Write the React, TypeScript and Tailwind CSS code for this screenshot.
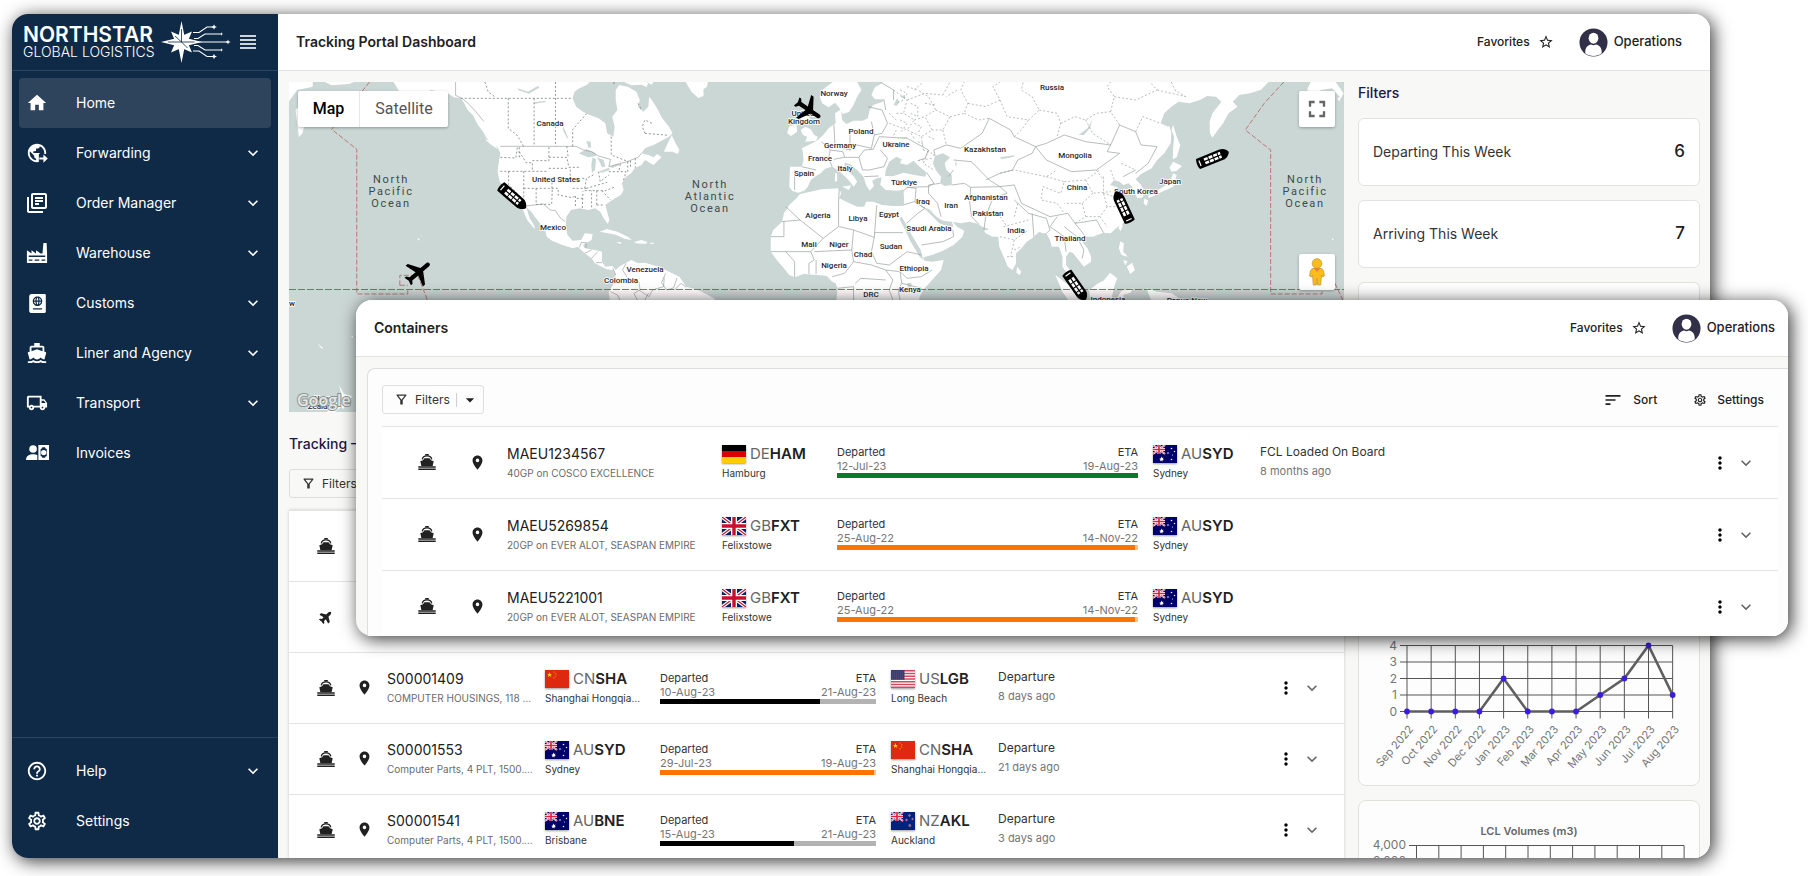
import React from 'react';
import {
    MdArrowDropDown,
    MdDirectionsBoat,
    MdFlight,
    MdFullscreen,
    MdHelpOutline,
    MdHome,
    MdKeyboardArrowDown,
    MdMoreVert,
    MdOutlineFilterAlt,
    MdOutlineLibraryBooks,
    MdOutlineLocalShipping,
    MdOutlineSettings,
    MdPlace,
    MdSort,
    MdStarBorder,
} from 'react-icons/md';
import { FaPassport, FaPlane } from 'react-icons/fa';

type Country = 'AU' | 'CN' | 'DE' | 'GB' | 'NZ' | 'US';

type Port = { country: Country; code: string; city: string };

type Shipment = {
    mode: 'sea' | 'air';
    ref?: string;
    detail?: string;
    from?: Port;
    to?: Port;
    departed?: string;
    eta?: string;
    progress?: number;
    tone?: 'green' | 'orange' | 'black';
    event?: string;
    eventAge?: string;
};

const sydney: Port = { country: 'AU', code: 'SYD', city: 'Sydney' };
const felixstowe: Port = { country: 'GB', code: 'FXT', city: 'Felixstowe' };
const shanghai: Port = { country: 'CN', code: 'SHA', city: 'Shanghai Hongqiao Intl' };

const containers: Shipment[] = [
    {
        mode: 'sea', ref: 'MAEU1234567', detail: '40GP on COSCO EXCELLENCE',
        from: { country: 'DE', code: 'HAM', city: 'Hamburg' }, to: sydney,
        departed: '12-Jul-23', eta: '19-Aug-23', progress: 100, tone: 'green',
        event: 'FCL Loaded On Board', eventAge: '8 months ago',
    },
    {
        mode: 'sea', ref: 'MAEU5269854', detail: '20GP on EVER ALOT, SEASPAN EMPIRE',
        from: felixstowe, to: sydney,
        departed: '25-Aug-22', eta: '14-Nov-22', progress: 99, tone: 'orange',
    },
    {
        mode: 'sea', ref: 'MAEU5221001', detail: '20GP on EVER ALOT, SEASPAN EMPIRE',
        from: felixstowe, to: sydney,
        departed: '25-Aug-22', eta: '14-Nov-22', progress: 99, tone: 'orange',
    },
];

const shipments: Shipment[] = [
    { mode: 'sea' },
    { mode: 'air' },
    {
        mode: 'sea', ref: 'S00001409', detail: 'COMPUTER HOUSINGS, 118 PLT, 2400 KG',
        from: shanghai, to: { country: 'US', code: 'LGB', city: 'Long Beach' },
        departed: '10-Aug-23', eta: '21-Aug-23', progress: 74, tone: 'black',
        event: 'Departure', eventAge: '8 days ago',
    },
    {
        mode: 'sea', ref: 'S00001553', detail: 'Computer Parts, 4 PLT, 1500.000 KG',
        from: sydney, to: shanghai,
        departed: '29-Jul-23', eta: '19-Aug-23', progress: 99, tone: 'orange',
        event: 'Departure', eventAge: '21 days ago',
    },
    {
        mode: 'sea', ref: 'S00001541', detail: 'Computer Parts, 4 PLT, 1500.000 KG',
        from: { country: 'AU', code: 'BNE', city: 'Brisbane' },
        to: { country: 'NZ', code: 'AKL', city: 'Auckland' },
        departed: '15-Aug-23', eta: '21-Aug-23', progress: 62, tone: 'black',
        event: 'Departure', eventAge: '3 days ago',
    },
];

const fillTone = { green: 'bg-[#0b7a24]', orange: 'bg-[#ff7300]', black: 'bg-black' };
const trackTone = { green: 'bg-[#9fcfa8]', orange: 'bg-[#ffc28f]', black: 'bg-[#b3b3b3]' };

/* ---------- icons ---------- */

const GlobeForwardIcon = () => (
    <svg viewBox="0 0 24 24" className="size-[22px]" fill="currentColor">
        <path d="M12 2C6.480 2 2 6.480 2 12s4.480 10 10 10 10-4.480 10-10S17.520 2 12 2zm-1 17.930c-3.950-.49-7-3.850-7-7.930 0-.62.08-1.210.21-1.790L9 15v1c0 1.100.9 2 2 2v1.930zm6.900-2.540c-.26-.81-1-1.390-1.900-1.390h-1v-3c0-.55-.45-1-1-1H8v-2h2c.55 0 1-.45 1-1V7h2c1.100 0 2-.9 2-2v-.41c2.930 1.190 5 4.060 5 7.410 0 2.080-.8 3.970-2.100 5.390z" />
        <path fill="#0f2a47" d="M14 13h10v11H14z" />
        <path d="M19 13.500l4.800 4.500-4.800 4.500v-3.400h-4.500v-2.200H19z" />
    </svg>
);

const FactoryIcon = () => (
    <svg viewBox="0 0 24 24" className="size-[22px]">
        <path fill="currentColor" d="M1 23V9l5 3.500V9l5 3.500V9l5 3.500h2L19 1h3.500L23 12.500V23z" />
        <path stroke="#0f2a47" strokeWidth="1.500" d="M3 15.500h18M3 19.800h4m2.500 0h5m2.500 0h4" />
    </svg>
);

const InvoiceIcon = () => (
    <svg viewBox="0 0 26 20" className="h-[18px] w-[23px]" fill="currentColor">
        <circle cx="8" cy="5.500" r="4.300" />
        <path d="M0 18c0-5 4-6.500 8-6.500 2 0 3.500.3 4.800 1V18z" />
        <path fillRule="evenodd" d="M14 1h12v17H14zM18.500 3.500a2.500 2.500 0 0 1-2 2v8a2.500 2.500 0 0 1 2 2h3a2.500 2.500 0 0 1 2-2v-8a2.500 2.500 0 0 1-2-2zM20 6.500a3 3 0 1 1 0 6 3 3 0 0 1 0-6z" />
    </svg>
);

const ShipIcon = () => (
    <svg viewBox="0 0 24 22" className="inline-block h-4 w-[18px]" fill="currentColor">
        <path d="M9.500 0h5v2h-5z" />
        <path fill="none" stroke="currentColor" strokeWidth="1.800" d="M5.500 7.500C6 4 8 2.600 12 2.600S18 4 18.500 7.500" />
        <path d="M6.500 8.500l2-2.500h7l2 2.500 3.700 1.300-1.500 7H4.300l-1.500-7z" />
        <path d="M0 17h24v1.900H0zM0 20h24v1.900H0z" />
    </svg>
);

const AvatarIcon = () => (
    <svg viewBox="0 0 30 30" className="size-[29px]">
        <circle cx="15" cy="15" r="14.500" fill="#322f48" />
        <ellipse cx="15" cy="10.500" rx="5" ry="5.700" fill="#fff" />
        <path fill="#fff" d="M6.500 26c-.5-6 3-8.500 6-9 1.600 1 3.500 1 5 0 3 .5 6.500 3 6 9-4.500 3.800-12.500 3.800-17 0z" />
    </svg>
);

const StarLogo = () => (
    <svg viewBox="0 0 70 42" className="h-[42px] w-[70px]" fill="none" stroke="#fff">
        <path strokeWidth="1.100" d="M32 11.500h6l8-5.500h7M33 17.500h4l7-4.500h17M36 21h31M33 24.500h4l7 4.500h17M32 30h6l8 5.500h7" />
        <path fill="#fff" stroke="none" d="M53 3.500l1 1.700 2 .8-2 .8-1 1.700-1-1.700-2-.8 2-.8zM53 33l1 1.700 2 .8-2 .8-1 1.700-1-1.700-2-.8 2-.8zM60 11l.7 1.400 1.500.6-1.500.6L60 15zM60 27l.7 1.400 1.500.6-1.500.6L60 31zM67 18.500l.7 1.800 2 .7-2 .7-.7 1.800-.7-1.800-2-.7 2-.7z" />
        <path fill="#fff" stroke="none" d="M20.500 0l3.300 16.800L41 21l-17.200 4.200L20.500 42l-3.300-16.800L0 21l17.200-4.200z" />
        <path fill="#fff" stroke="none" d="M10 10.500l10.500 4.500L31 10.500 26.500 21 31 31.500 20.500 27 10 31.500 14.500 21z" />
        <path stroke="#0f2a47" strokeWidth=".8" d="M20.500 8v13H7M20.500 21l-6.500-6M20.500 21h13M20.500 21l6 6" />
    </svg>
);

const Flag = ({ country }: { country: Country }) => (
    <svg viewBox="0 0 24 18" preserveAspectRatio="none" className="h-[18px] w-6 shrink-0 shadow-[0_1px_2px_rgba(0,0,0,0.4)]">
        {country === 'DE' && (
            <>
                <path fill="#000" d="M0 0h24v6H0z" />
                <path fill="#d00" d="M0 6h24v6H0z" />
                <path fill="#ffce00" d="M0 12h24v6H0z" />
            </>
        )}
        {country === 'GB' && (
            <>
                <path fill="#012169" d="M0 0h24v18H0z" />
                <path stroke="#fff" strokeWidth="3.600" d="M0 0l24 18M24 0L0 18" />
                <path stroke="#c8102e" strokeWidth="1.200" d="M0 0l24 18M24 0L0 18" />
                <path stroke="#fff" strokeWidth="6" d="M12 0v18M0 9h24" />
                <path stroke="#c8102e" strokeWidth="3.400" d="M12 0v18M0 9h24" />
            </>
        )}
        {(country === 'AU' || country === 'NZ') && (
            <>
                <path fill={country === 'AU' ? '#00006a' : '#00217d'} d="M0 0h24v18H0z" />
                <path stroke="#fff" strokeWidth="2" d="M0 0l12 9M12 0L0 9" />
                <path stroke="#e4405a" strokeWidth=".8" d="M0 0l12 9M12 0L0 9" />
                <path stroke="#fff" strokeWidth="3" d="M6 0v9M0 4.500h12" />
                <path stroke="#e4203e" strokeWidth="1.700" d="M6 0v9M0 4.500h12" />
            </>
        )}
        {country === 'AU' && (
            <g fill="#fff">
                <path d="M8.500 11.500l.6 1.400 1.500-.3-.8 1.300 1.100 1-1.500.3-.1 1.500-.9-1.200-1.300.7.400-1.500-1.300-.7 1.400-.5z" />
                <circle cx="18.500" cy="3.500" r=".8" />
                <circle cx="15" cy="8" r=".8" />
                <circle cx="21.500" cy="6.500" r=".7" />
                <circle cx="19.500" cy="10" r=".5" />
                <circle cx="18.500" cy="14.500" r=".8" />
            </g>
        )}
        {country === 'NZ' && (
            <g fill="#d8304a" stroke="#fff" strokeWidth=".3">
                <circle cx="18.500" cy="3.500" r=".9" />
                <circle cx="15.500" cy="8" r=".9" />
                <circle cx="21.500" cy="7" r=".8" />
                <circle cx="18.800" cy="13.500" r="1.100" />
            </g>
        )}
        {country === 'CN' && (
            <>
                <path fill="#de2910" d="M0 0h24v18H0z" />
                <path fill="#ffde00" d="M4.500 2l.6 1.900H7L5.500 5l.6 1.900-1.600-1.100-1.600 1.100L3.500 5 2 3.900h1.900z" />
                <g fill="#ffb000">
                    <circle cx="9" cy="2" r=".6" />
                    <circle cx="10.800" cy="3.800" r=".6" />
                    <circle cx="10.800" cy="6" r=".6" />
                    <circle cx="9" cy="7.800" r=".6" />
                </g>
            </>
        )}
        {country === 'US' && (
            <>
                <path fill="#fff" d="M0 0h24v18H0z" />
                <path stroke="#cf4a5c" strokeWidth="1.400" d="M0 .7h24M0 3.500h24M0 6.200h24M0 9h24M0 11.800h24M0 14.500h24M0 17.300h24" />
                <path fill="#3c3b6e" d="M0 0h13.500v9.700H0z" />
                <path stroke="#8c90b8" strokeWidth=".5" strokeDasharray=".6 1.400" d="M1 2h12M1 4h12M1 6h12M1 8h12" />
            </>
        )}
    </svg>
);

/* ---------- sidebar ---------- */

const navItems = [
    { label: 'Home', icon: <MdHome className="size-[22px]" />, active: true },
    { label: 'Forwarding', icon: <GlobeForwardIcon />, expandable: true },
    { label: 'Order Manager', icon: <MdOutlineLibraryBooks className="size-6" />, expandable: true },
    { label: 'Warehouse', icon: <FactoryIcon />, expandable: true },
    { label: 'Customs', icon: <FaPassport className="size-[19px]" />, expandable: true },
    { label: 'Liner and Agency', icon: <MdDirectionsBoat className="size-[22px]" />, expandable: true },
    { label: 'Transport', icon: <MdOutlineLocalShipping className="size-[22px]" />, expandable: true },
    { label: 'Invoices', icon: <InvoiceIcon /> },
];

const footerItems = [
    { label: 'Help', icon: <MdHelpOutline className="size-[22px]" />, expandable: true },
    { label: 'Settings', icon: <MdOutlineSettings className="size-[22px]" /> },
];

type NavItemProps = { label: string; icon: React.ReactNode; active?: boolean; expandable?: boolean };

const NavItem = ({ label, icon, active, expandable }: NavItemProps) => (
    <li>
        <a
            href="#"
            className={`flex h-[50px] items-center rounded-[4px] pr-2 text-sm text-white ${active ? 'bg-[#2e445c]' : ''}`}
        >
            <span className="flex w-9 justify-center">{icon}</span>
            <span className="ml-[21px] flex-1">{label}</span>
            {expandable && <MdKeyboardArrowDown className="size-5" />}
        </a>
    </li>
);

const Sidebar = () => (
    <aside className="flex w-[266px] shrink-0 flex-col bg-[#0f2a47] text-white">
        <div className="flex h-[57px] items-center border-b border-[#2a4560] pl-[11px] pr-[22px]">
            <div>
                <div className="text-[21px] leading-5 font-semibold">NORTHSTAR</div>
                <div className="text-sm leading-[14px] font-light">GLOBAL LOGISTICS</div>
            </div>
            <div className="ml-1.5">
                <StarLogo />
            </div>
            <button type="button" aria-label="Toggle menu" className="ml-auto flex flex-col gap-0.5">
                <span className="h-0.5 w-4 bg-white/80" />
                <span className="h-0.5 w-4 bg-white/80" />
                <span className="h-0.5 w-4 bg-white/80" />
                <span className="h-0.5 w-4 bg-white/80" />
            </button>
        </div>
        <nav className="flex-1 px-[7px] pt-[7px]">
            <ul>
                {navItems.map((item) => (
                    <NavItem key={item.label} {...item} />
                ))}
            </ul>
        </nav>
        <ul className="border-t border-[#2a4560] px-[7px] pt-2 pb-3">
            {footerItems.map((item) => (
                <NavItem key={item.label} {...item} />
            ))}
        </ul>
    </aside>
);

/* ---------- shared bits ---------- */

const TopBar = ({ title, className }: { title: string; className: string }) => (
    <header className={`flex h-[57px] shrink-0 items-center border-b border-[#e3e3e3] bg-white pl-[18px] text-[#212121] ${className}`}>
        <h1 className="flex-1 text-sm font-semibold">{title}</h1>
        <button type="button" className="flex items-center gap-2 text-xs font-medium">
            Favorites
            <MdStarBorder className="size-4" />
        </button>
        <button type="button" className="ml-[25px] flex items-center gap-1.5 text-[13px] font-medium">
            <AvatarIcon />
            Operations
        </button>
    </header>
);

const FiltersButton = () => (
    <div className="flex h-[29px] w-[102px] items-center rounded-[3px] border border-[#dedede] text-[#333]">
        <button type="button" className="flex flex-1 items-center gap-1.5 pl-[11px] text-xs">
            <MdOutlineFilterAlt className="size-[15px]" />
            Filters
        </button>
        <span className="h-3.5 w-px bg-[#d0d0d0]" />
        <button type="button" aria-label="Filter presets" className="flex w-[26px] justify-center">
            <MdArrowDropDown className="size-5 text-[#212121]" />
        </button>
    </div>
);

const PortCell = ({ port }: { port?: Port }) => (
    <td className="p-0">
        {port && (
            <>
                <div className="flex items-center gap-1 text-[15px] leading-5">
                    <Flag country={port.country} />
                    <span>
                        <span className="text-[#666]">{port.country}</span>
                        <span className="font-semibold text-[#212121]">{port.code}</span>
                    </span>
                </div>
                <div className="max-w-24 truncate text-[10px] leading-[18px] text-[#333]">{port.city}</div>
            </>
        )}
    </td>
);

const ShipmentRow = ({ item, roomy }: { item: Shipment; roomy?: boolean }) => (
    <tr className={`border-t border-[#e4e4e4] bg-white ${roomy ? 'h-[72px]' : 'h-[71px]'}`}>
        <td className="p-0 pr-1.5 pb-1 text-right text-[#212121]">
            {item.mode === 'sea' ? <ShipIcon /> : <FaPlane className="mr-0.5 inline-block size-3.5 -rotate-45" />}
        </td>
        <td className={`p-0 pb-1 text-center text-[#212121] ${roomy ? 'pl-1.5' : ''}`}>
            {item.ref && <MdPlace className="inline-block size-[17px]" />}
        </td>
        <td className="p-0 pr-3">
            <div className="truncate text-sm leading-5 text-[#212121]">{item.ref}</div>
            <div className="truncate text-[10px] leading-[18px] text-[#6b6b6b]">{item.detail}</div>
        </td>
        <PortCell port={item.from} />
        <td className="p-0 pr-[15px] pb-0.5 text-[11px] leading-[14px]">
            {item.tone && (
                <>
                    <div className="flex justify-between text-[#333]">
                        <span>Departed</span>
                        <span>ETA</span>
                    </div>
                    <div className="flex justify-between text-[#757575]">
                        <span>{item.departed}</span>
                        <span>{item.eta}</span>
                    </div>
                    <div className={`h-[5px] ${trackTone[item.tone]}`}>
                        <div className={`h-full ${fillTone[item.tone]}`} style={{ width: `${item.progress}%` }} />
                    </div>
                </>
            )}
        </td>
        <PortCell port={item.to} />
        <td className="p-0 pb-1">
            <div className="text-xs leading-5 text-[#333]">{item.event}</div>
            <div className="text-[11px] leading-[18px] text-[#757575]">{item.eventAge}</div>
        </td>
        <td className="p-0 pr-[22px]">
            <div className="flex items-center justify-end gap-1.5">
                <button type="button" aria-label="More actions"><MdMoreVert className="size-5 text-black" /></button>
                <button type="button" aria-label="Expand row"><MdKeyboardArrowDown className="size-5 text-[#666]" /></button>
            </div>
        </td>
    </tr>
);

const ShipmentTable = ({ items, widths, roomy }: { items: Shipment[]; widths: string[]; roomy?: boolean }) => (
    <table className="w-full table-fixed">
        <colgroup>
            {widths.map((width, idx) => (
                <col key={idx} className={width} />
            ))}
        </colgroup>
        <tbody>
            {items.map((item, idx) => (
                <ShipmentRow key={idx} item={item} roomy={roomy} />
            ))}
        </tbody>
    </table>
);

/* ---------- map ---------- */

const mapLabels: [string, number, number][] = [
    ['Canada', 261, 41], ['United States', 267, 97], ['Mexico', 264, 145], ['Venezuela', 356, 187],
    ['Colombia', 332, 198], ['Norway', 545, 11], ['Russia', 763, 5], ['Poland', 572, 49],
    ['Germany', 551, 63], ['Ukraine', 607, 62], ['France', 531, 76], ['Italy', 556, 86],
    ['Spain', 515, 91], ['Kazakhstan', 696, 67], ['Mongolia', 786, 73], ['Türkiye', 615, 100],
    ['China', 788, 105], ['Japan', 881, 99], ['South Korea', 847, 109], ['Iraq', 634, 119],
    ['Afghanistan', 697, 115], ['Iran', 662, 123], ['Pakistan', 699, 131], ['Algeria', 529, 133],
    ['Libya', 569, 136], ['Egypt', 600, 132], ['Saudi Arabia', 640, 146], ['India', 727, 148],
    ['Thailand', 781, 156], ['Mali', 520, 162], ['Niger', 550, 162], ['Sudan', 602, 164],
    ['Chad', 574, 172], ['Nigeria', 545, 183], ['Ethiopia', 625, 186], ['Kenya', 621, 207],
    ['DRC', 582, 212], ['Indonesia', 819, 217], ['Papua New', 898, 218],
    ['United', 514, 31], ['Kingdom', 515, 39],
];

const oceans: [string[], number, number][] = [
    [['North', 'Pacific', 'Ocean'], 102, 97],
    [['North', 'Atlantic', 'Ocean'], 421, 102],
    [['North', 'Pacific', 'Ocean'], 1016, 97],
];

const VesselMarker = ({ x, y, angle }: { x: number; y: number; angle: number }) => (
    <g transform={`translate(${x} ${y}) rotate(${angle})`}>
        <path d="M-16-5.500h25c4 0 7 3 8 5.500-1 2.500-4 5.500-8 5.500h-25c-1.500-3-1.500-8 0-11z" />
        <path fill="none" stroke="#fff" strokeWidth="1.200" d="M-14-3v6" />
        <path fill="#fff" d="M-9-3.200h4v2.600h-4zM-4-3.200h4v2.600h-4zM1-3.200h4v2.600h-4zM6-3.200h2.500v2.600H6zM-9 .6h4v2.600h-4zM-4 .6h4v2.600h-4zM1 .6h4v2.600h-4zM6 .6h2.500v2.600H6z" />
    </g>
);

const WorldMap = () => (
    <svg viewBox="0 0 1055 330" preserveAspectRatio="xMidYMin slice" className="block size-full bg-[#cbd7d5]">
        {/* Americas */}
        <g transform="translate(-9 -12) scale(.3443 .3333)" fill="#fff">
            <path d="M330 36L345 62 400 75 440 60 490 72 505 82 525 85 535 100 545 120 560 135 575 165 590 185 600 205 615 220 632 232 640 250 635 280 632 305 638 335 655 352 680 385 700 405 708 425 718 450 730 465 740 478 738 466 725 445 718 420 712 408 730 425 740 440 755 460 770 480 775 500 790 512 820 525 850 535 865 530 885 550 905 565 915 580 930 588 950 598 968 600 975 615 970 640 955 665 960 720 1290 720 1260 685 1215 660 1180 650 1160 620 1130 605 1100 590 1060 578 1040 580 1020 570 1005 578 985 590 975 600 965 588 945 590 935 575 935 545 915 540 885 535 880 525 905 510 908 492 885 490 875 510 850 512 835 495 830 470 832 440 845 420 870 415 895 420 915 415 930 425 940 445 952 462 957 450 950 425 945 405 965 390 990 375 998 360 993 340 1005 320 1020 310 1030 295 1050 285 1060 270 1085 285 1108 262 1095 252 1085 262 1070 255 1050 250 1060 235 1085 225 1130 200 1140 190 1130 170 1110 145 1095 115 1080 90 1072 80 1070 110 1055 125 1040 110 1045 90 1035 65 1010 50 985 45 975 60 975 90 980 120 965 140 972 170 968 200 950 190 945 160 925 145 900 135 880 125 860 110 850 85 855 65 870 55 890 45 900 36z" />
            <path d="M1115 245L1128 215 1138 196 1148 218 1160 240 1155 252 1140 245zM928 485L950 477 980 485 1010 500 1022 510 1000 506 975 494 945 488zM1028 516L1050 510 1068 517 1060 522 1035 520zM1074 518h12v3h-12zM975 516l16 1-2 5zM1000 36l20 10 30-2 15 8 5-16zM1085 36l-6 8-14-8zM1178 36L1195 65 1215 84 1230 78 1230 58 1240 50 1243 36zM25 95L50 60 95 50 95 36H25zM130 36l20 10 50-4 15-6zM45 120l20-20 30-20 10 20-30 50-10 40-10 12zM400 504l6 4-4 4zM595 208l18 16 20 14-8-14-14-12z" />
            <g fill="#cbd7d5">
                <path d="M868 250L890 238 915 248 918 258 895 262 880 256zM908 262L918 268 915 300 906 308 904 285zM920 262L940 270 945 290 935 292 928 275zM925 305L955 293 958 300 935 308zM958 290L985 280 985 286 965 294zM740 96l32-4v4l-36 6zM690 55l30 10 30-18 3 6-30 18-30-10zM820 165l10 20 8 22-5-4-10-20zM890 213l12 2 2 16-8 4z" />
            </g>
            <g fill="none" stroke="#8f9694" strokeWidth=".6">
                <path vectorEffect="non-scaling-stroke" d="M510 36v40l20 10 20 18 18 20 24 30M640 229H860L882 240 905 245 925 258 960 268 955 290 1008 275 1040 262 1050 250M712 408L765 402 785 420 800 422 815 445 828 455M870 532l5-14 14 0 0 16M885 550l20-10M905 565l18-20M918 578l17 0M975 615l-8-20M1005 580l-10 20 15 25 32 10 4 25-18 10 10 20M1042 660l30 20 10-20 32-10 2-28M1120 610l-12 28 15 22 20-6 10-30M1145 660l20-20 15 12M960 665l20 10 10 20M1060 690l10-20" />
                <path vectorEffect="non-scaling-stroke" stroke="#767e7c" strokeWidth=".8" strokeDasharray="2 2" d="M525 85H850M595 36l10 30 20 15M663 85v90l25 20 20 35M738 85v144M800 36v193M850 229v-50l42-50M962 200v55l50 20M1060 190l70 6M1060 190l-8-20 8-20 20 10M640 262l45 2 5-35M640 304H780M664 304v40l40 42M708 304v100M695 262v-33M695 245l20 33h18v26M733 272h48v-43M781 262h52l6 30h35M833 229l4 33M781 295h56M781 325h62v-30M708 355h72l28 0v20l40 8 10-5M790 325v30M744 355v48h45l2-48M843 325l20 0 22 0M850 355h40M858 378v36M862 385h22M885 355l5-30 20-10M878 414l2-50M905 412v-50M885 362h60l25-10M890 355l60-18M920 405h22M920 362v43M935 362l25 28M925 305l5 30 25-20M955 305h50l-8 28M985 300l5-25M1010 275v30M1018 272v24M1032 265v28M1040 100l10 20M970 36v10" />
            </g>
            <path fill="none" stroke="#b97777" strokeWidth="1" strokeDasharray="5 2" vectorEffect="non-scaling-stroke" d="M260 36L150 178 223 238V672H371V655M348 646V616H400L428 690M348 646H371" />
        </g>

        {/* Europe, Africa, Asia */}
        <g transform="translate(511 -12) scale(.3571 .3333)" fill="#fff">
            <path d="M-28 290L-30 350-22 362-5 368 12 362 22 350 30 330 45 318 58 310 70 296 90 290 105 300 125 318 140 335 150 350 160 335 150 318 135 305 125 290 125 278 140 282 160 300 178 320 185 345 195 362 207 348 202 332 215 325 228 322 225 345 240 360 275 362 290 358 292 405 285 408 260 408 230 405 205 395 185 395 180 410 160 410 130 395 110 385 115 370 110 355 60 358 30 365 0 372 -10 385 -30 405 -45 430 -50 455 -75 480 -82 500 -82 545 -65 570 -45 595 -30 615 -15 622 10 612 50 615 75 618 90 635 100 640 105 655 100 720 330 720 335 680 345 660 370 630 395 600 402 570 370 575 348 572 345 562 370 555 400 542 430 525 455 500 460 482 440 470 428 455 450 460 475 455 500 462 510 470 530 478 515 482 520 490 540 500 555 500 558 530 570 560 582 590 595 600 605 580 605 550 620 535 635 515 650 505 655 500 670 485 680 490 690 490 700 510 705 530 725 530 735 560 735 590 745 605 755 620 775 640 770 620 760 605 745 585 745 560 755 545 765 550 780 570 795 590 815 575 815 560 805 535 790 515 792 500 820 500 850 488 870 490 885 475 905 460 915 440 905 410 900 385 880 365 890 352 868 345 880 330 895 335 905 345 920 340 930 350 938 370 945 385 960 382 965 365 955 345 940 328 955 312 985 295 1000 270 1020 250 1038 220 1040 190 1035 170 1010 160 1020 130 1040 110 1060 95 1090 100 1120 90 1140 78 1165 80 1180 95 1155 130 1147 155 1148 190 1155 203 1170 180 1185 160 1200 130 1225 110 1212 95 1230 75 1260 70 1290 60 1312 36H225L210 50 200 75 210 88 235 88 232 95 205 105 195 120 190 145 175 152 150 152 130 162 118 150 115 118 98 130 100 160 80 175 65 195 50 210 30 222 5 235 8 245 10 270 5 290z" />
            <path d="M92 36L65 58 55 80 62 100 80 112 98 98 108 110 120 132 137 126 150 105 160 80 172 60 160 36zM-36 190L-30 168-10 165-8 185-25 198zM2 180L15 170 30 178 40 195 50 200 45 212 15 215 20 200 8 195zM5 120L-5 130 5 150 20 165 30 150 20 130zM1045 165L1055 200 1065 225 1055 262 1044 268 1045 230 1048 200 1040 180zM1045 275L1070 288 1055 302 1040 305 1035 292zM1045 310L1055 315 1045 350 1020 362 990 378 978 384 974 378 1000 362 1025 345 1040 325zM965 385L975 392 970 408 962 400zM898 458L904 465 898 484 892 475zM897 514L907 520 905 545 918 560 900 555 893 535zM915 590L930 578 938 600 925 612zM905 570l12 4-6 12zM715 615L740 635 770 660 800 720 770 720 735 665zM815 720L810 660 835 640 850 632 868 608 888 625 880 650 865 720zM890 680L900 662 935 655 925 668 905 675 910 700 895 700zM970 655L1000 665 1040 670 1100 710 990 710zM608 590L620 605 615 615 606 608zM1420 60L1430 36 1500 36 1522 70 1515 85 1490 55 1460 60 1440 70zM1505 85l10-5-5 15zM1490 503l5 6-4 2zM98 310h6v22l-6 4zM118 350l25-4-6 14z" />
            <g fill="#cbd7d5">
                <path d="M240 300L250 275 270 260 285 268 280 280 300 285 318 272 335 290 355 308 350 320 320 315 290 308 262 318 238 318zM378 258L400 250 420 262 405 280 410 300 425 315 425 345 405 348 392 340 395 320 380 300 372 280zM285 440L300 470 318 505 338 540 345 570 335 560 310 515 292 475 278 445zM345 412L362 418 382 440 400 452 425 455 430 470 412 468 390 460 372 440zM438 270v22l-4-10zM560 262l40-6v4l-36 8zM780 195L805 175 818 150 812 175 795 195zM1010 160L1030 125 1030 170zM270 205l30-4 0 4zM262 105l10-20 6 10-6 12zM280 80l14-6 0 12zM195 60L230 40 225 36 205 36zM300 640l12-2 0 14-10 2z" />
            </g>
            <g fill="none" stroke="#9aa19f" strokeWidth=".7">
                <path vectorEffect="non-scaling-stroke" d="M5 290L45 300M-15 300v60M60 215L85 240 80 265 90 290M95 165L98 230 140 240 160 225 200 235 208 195 200 155M140 185v55M85 240L120 245 125 262 95 268M125 262L165 262 180 240 205 238 222 200 300 205 360 240 350 265 330 272M165 262L175 300 195 300 235 290 245 265 225 240M180 320L220 318M190 110L230 120 245 160 230 190 208 195M235 88L240 120M225 36L262 60 262 90M355 308L375 340 360 350 300 352 290 362M300 352L325 355 322 395 350 415M290 405L320 395 350 415M360 345L360 370 385 400 395 440M392 340L360 345M425 345L460 340 478 352 475 395 480 440 500 462M378 258L375 240 410 225 450 235 510 190 530 145 590 180 600 200 660 230 650 250 610 270 595 300 560 310 520 330M372 255h5M430 270L480 275 530 330 560 350M430 300L415 320M478 352L560 350 580 370 540 385 520 440 515 480M560 350L600 345 620 400 700 440 750 430 770 460 830 450 850 488M600 390L640 430 690 445M650 430L655 500M660 230L690 220 740 195 800 215 870 225 860 245 895 250 830 300 760 305 690 270 660 230M870 225L895 165 940 185 955 225 1000 230 985 260 975 280 940 310M905 320L940 300M690 445L700 480 690 490M720 440L700 470 740 500 745 545M740 470L775 500 795 540 790 565M770 460L800 500M110 355L108 395 108 470 65 505 0 450-50 455M0 450L-40 410M-82 500L-45 500-45 455M-40 545H30L65 505M-82 545L-40 545-15 575-15 622M30 545L40 570 25 580 25 612M45 570V612M40 545L145 540 150 480 110 470M150 480L208 502 215 405M208 488H288M208 502L200 545 215 580 250 585 275 565 300 545 340 555M145 540L150 575 125 610 90 620M150 575L200 585 240 600 280 605 285 640 340 655M285 640L275 660 280 690M240 600L260 630 250 660 260 690M155 640L170 625 240 630M105 655L150 650 150 690M280 605L300 625 340 620 370 600M298 460L330 430 350 415M340 525L400 515 430 500 428 480" />
                <path vectorEffect="non-scaling-stroke" strokeDasharray="2 2" d="M262 60L300 90 290 130 320 150 300 180 340 200 370 180 350 140 380 120 360 80 330 60M300 90L350 70 400 75M320 150L350 140M340 200L345 240M380 120L420 140 400 180 370 180M400 75L420 36M420 140L460 130 470 100 450 60 460 36M460 130L500 150 530 145M470 100L520 110 560 90 540 50 560 36M560 90L580 140 640 150 620 180 600 200M640 150L670 120 650 80 620 60 625 36M670 120L720 130 730 160 720 200M730 160L770 140 800 150 830 130 870 125 895 165M870 125L880 80 860 50 870 36M800 150L820 190 870 225M880 80L940 90 1000 60 980 36M1000 60L1080 80M1040 36L1050 60 1080 80M940 185L960 140 1010 160M270 130L290 130M250 160L300 180M360 240L345 280 375 300M330 272L370 265M300 50L330 60M345 240L370 250M560 310L600 300 690 320 720 300M690 320L740 335 730 370 680 350 675 390 720 400 740 430M740 335L800 330 840 300M800 330L820 370 870 365M820 370L790 400 740 400M790 400L800 440 770 460M850 320L850 370 880 380M850 370L860 410 900 410M860 410L840 440 860 470M800 440L840 440M830 300L850 330M870 300L880 330M900 280L940 300M570 470L640 450M560 500L600 510 640 480M600 510L590 560M600 540L620 530M560 440L580 470M610 400L600 440M580 560L600 560M280 60L300 70 290 90 270 100M310 100L330 110 330 140 310 130M280 150L300 160 280 190M320 160L340 170 330 190M250 130L270 150M350 100L380 105M320 60L340 40M270 180L260 200M310 190L320 205M360 200L380 210M330 215L350 225M400 180L410 225M440 60L410 80" />
            </g>
            <path fill="none" stroke="#b97777" strokeWidth="1" strokeDasharray="5 2" vectorEffect="non-scaling-stroke" d="M1355 36L1300 100 1247 180 1318 240V672H1462V655M1498 640L1520 690" />
        </g>

        {/* New Zealand and small islands */}
        <path fill="#fff" d="M50 303l5 9 8 2-3 6-6 7-3-4 2-8zM48 319l4 6-6 5h-8zM28 261l6 5-1 1zM62 254h2v2z" />

        <path stroke="#8f4b4b" strokeWidth="1" strokeDasharray="7 2" opacity=".8" d="M0 207.500h1055" />

        <g className="font-['Roboto',sans-serif] [paint-order:stroke]" fontSize="8" fontWeight="500" fill="#2a2a2a" stroke="#fff" strokeWidth="1.500" textAnchor="middle">
            {mapLabels.map(([name, x, y]) => (
                <text key={name} x={x} y={y + 3}>{name}</text>
            ))}
            <text x="3" y="224">w</text>
            <text x="33" y="319">New</text>
            <text x="33" y="327">Zealand</text>
        </g>
        <g className="font-['Roboto',sans-serif] tracking-[0.15em]" fontSize="11" fill="#3c4a4a" textAnchor="middle">
            {oceans.map(([lines, x, y]) =>
                lines.map((line, idx) => (
                    <text key={`${line}-${x}`} x={x} y={y + 4 + idx * 12}>{line}</text>
                ))
            )}
        </g>

        <VesselMarker x={224} y={115} angle={41} />
        <VesselMarker x={924} y={76} angle={-22} />
        <VesselMarker x={834} y={125} angle={-115} />
        <VesselMarker x={787} y={204} angle={55} />
        <g transform="translate(130 191) rotate(50)">
            <MdFlight x="-17" y="-17" size={34} />
        </g>
        <g transform="translate(519 28) rotate(124)">
            <MdFlight x="-17" y="-17" size={34} />
        </g>

        <text x="8" y="324" className="font-['Open_Sans',sans-serif] [paint-order:stroke]" fontSize="16" fontWeight="600" fill="#fff" fillOpacity=".8" stroke="#8d9694" strokeWidth="2">Google</text>
    </svg>
);

const MapPanel = () => (
    <section aria-label="Shipment map" className="relative h-[330px] shrink-0 overflow-hidden">
        <WorldMap />
        <div className="absolute top-[9px] left-[9px] flex h-9 rounded-[2px] bg-white font-['Roboto',sans-serif] text-base shadow-[0_1px_3px_rgba(0,0,0,0.3)]">
            <button type="button" className="w-[62px] border-r border-[#e8e8e8] font-medium text-black">Map</button>
            <button type="button" className="w-[88px] text-[#565656]">Satellite</button>
        </div>
        <button type="button" aria-label="Toggle fullscreen" className="absolute top-[9px] right-[9px] flex size-9 items-center justify-center rounded-[2px] bg-white shadow-[0_1px_3px_rgba(0,0,0,0.3)]">
            <MdFullscreen className="size-7 text-[#666]" />
        </button>
        <button type="button" aria-label="Street view" className="absolute top-[172px] right-[9px] flex size-9 items-center justify-center rounded-[2px] bg-white shadow-[0_1px_3px_rgba(0,0,0,0.3)]">
            <svg viewBox="0 0 16 28" className="h-7 w-4" fill="#fbbc1c" stroke="#c79a3e" strokeWidth=".8">
                <path d="M4 10.500C1.500 11 1 14 .6 18l2 1 .9-2 .8 10h3l.7-7 .7 7h3l.8-10 .9 2 2-1C15 14 14.500 11 12 10.500z" />
                <path fill="#ea7a3c" stroke="none" d="M5 10l3 4 3-4z" />
                <circle cx="8" cy="5.500" r="4.800" />
            </svg>
        </button>
    </section>
);

/* ---------- right column ---------- */

const FilterCard = ({ label, count }: { label: string; count?: number }) => (
    <button type="button" className="flex h-[68px] w-full shrink-0 items-center justify-between rounded-md border border-[#e2e2df] bg-white px-3.5 text-left text-[#333]">
        <span className="text-sm">{label}</span>
        <span className="text-[17px] font-medium text-[#212121]">{count}</span>
    </button>
);

const months = [
    'Sep 2022', 'Oct 2022', 'Nov 2022', 'Dec 2022', 'Jan 2023', 'Feb 2023',
    'Mar 2023', 'Apr 2023', 'May 2023', 'Jun 2023', 'Jul 2023', 'Aug 2023',
];
const monthly = [0, 0, 0, 0, 2, 0, 0, 0, 1, 2, 4, 1];
const px = (i: number) => 48 + i * 24.15;
const py = (v: number) => 76.5 - v * 16.5;

const MonthlyChart = () => (
    <svg viewBox="0 0 340 150" className="w-full" fontSize="12" fill="#757575">
        <g stroke="#555" strokeWidth="1">
            {[0, 1, 2, 3, 4].map((v) => (
                <path key={v} d={`M${px(0) - 7} ${py(v)}H${px(11)}`} />
            ))}
            {months.map((m, i) => (
                <path key={m} d={`M${px(i)} ${py(4)}V${py(0) + 7}`} />
            ))}
        </g>
        {[0, 1, 2, 3, 4].map((v) => (
            <text key={v} x="38" y={py(v) + 4} textAnchor="end">{v}</text>
        ))}
        {months.map((m, i) => (
            <text key={m} transform={`translate(${px(i) + 7} ${py(0) + 18}) rotate(-49)`} fontSize="11" textAnchor="end">{m}</text>
        ))}
        <polyline fill="none" stroke="#5f5f5f" strokeWidth="2.600" points={monthly.map((v, i) => `${px(i)},${py(v)}`).join(' ')} />
        {monthly.map((v, i) => (
            <circle key={i} cx={px(i)} cy={py(v)} r="2.900" fill="#3b1fd6" />
        ))}
    </svg>
);

const VolumeChart = () => (
    <svg viewBox="0 0 340 80" className="w-full" fontSize="12" fill="#757575">
        <path stroke="#555" fill="none" d="M50 12.500H325M50 30.500H325" />
        <g stroke="#555">
            {months.concat('end').map((m, i) => (
                <path key={m} d={`M${57.5 + i * 22.3} 12.500V80`} />
            ))}
        </g>
        <text x="47" y="16" textAnchor="end">4,000</text>
        <text x="47" y="32" textAnchor="end">3,000</text>
    </svg>
);

const RightColumn = () => (
    <div className="flex w-[342px] shrink-0 flex-col gap-3.5">
        <h2 className="h-[22px] shrink-0 text-sm leading-[22px] font-medium text-[#1f1647]">Filters</h2>
        <FilterCard label="Departing This Week" count={6} />
        <FilterCard label="Arriving This Week" count={7} />
        <FilterCard label="" />
        <div className="flex h-[422px] shrink-0 flex-col justify-end rounded-lg border border-[#e2e2dc] bg-[#fdfdfd]">
            <MonthlyChart />
        </div>
        <div className="shrink-0 rounded-lg border border-[#e2e2dc] bg-[#fdfdfd] pt-5">
            <h3 className="text-center text-[11px] leading-5 font-semibold text-[#666]">LCL Volumes (m3)</h3>
            <div className="-mt-2">
                <VolumeChart />
            </div>
        </div>
    </div>
);

/* ---------- windows ---------- */

const DashboardWindow = () => (
    <div className="flex h-full overflow-hidden rounded-2xl shadow-[3px_3px_18px_rgba(0,0,0,0.8)]">
        <Sidebar />
        <div className="flex min-w-0 flex-1 flex-col bg-[#f8f8f6]">
            <TopBar title="Tracking Portal Dashboard" className="pr-7" />
            <main className="flex min-h-0 flex-1 gap-3.5 overflow-hidden pt-[11px] pr-2.5 pl-[11px]">
                <div className="flex min-w-0 flex-1 flex-col">
                    <MapPanel />
                    <h2 className="mt-[22px] shrink-0 text-sm leading-5 font-medium text-[#1f1647]">Tracking – Shipments</h2>
                    <div className="mt-[15px] mb-3 shrink-0">
                        <FiltersButton />
                    </div>
                    <div className="shrink-0 shadow-[0_0_3px_rgba(0,0,0,0.2)]">
                        <ShipmentTable
                            items={shipments}
                            widths={['w-[52px]', 'w-[46px]', 'w-[158px]', 'w-[115px]', 'w-[231px]', 'w-[107px]', '', 'w-[90px]']}
                        />
                    </div>
                </div>
                <RightColumn />
            </main>
        </div>
    </div>
);

const ContainersWindow = () => (
    <section className="absolute top-[300px] right-5 bottom-60 left-[356px] flex flex-col overflow-hidden rounded-2xl bg-[#f8f8f6] shadow-[3px_3px_18px_rgba(0,0,0,0.8)]">
        <TopBar title="Containers" className="pr-[13px]" />
        <div className="mt-[11px] ml-[11px] flex-1 rounded-tl-lg border-t border-l border-[#dedede] bg-[#fdfdfd] pr-2.5 pl-3.5">
            <div className="flex h-[57px] items-center pt-1">
                <FiltersButton />
                <button type="button" className="ml-auto flex items-center gap-2.5 text-xs font-medium text-[#212121]">
                    <MdSort className="size-5" />
                    Sort
                </button>
                <button type="button" className="mr-3.5 ml-9 flex items-center gap-2.5 text-xs font-medium text-[#212121]">
                    <MdOutlineSettings className="size-3.5" />
                    Settings
                </button>
            </div>
            <ShipmentTable
                items={containers}
                roomy
                widths={['w-[60px]', 'w-[65px]', 'w-[215px]', 'w-[115px]', 'w-[316px]', 'w-[107px]', '', 'w-[90px]']}
            />
        </div>
    </section>
);

export default function App() {
    return (
        <div className="relative h-screen overflow-hidden bg-white pt-3.5 pr-[98px] pb-[18px] pl-3 font-['Inter','DejaVu_Sans',sans-serif]">
            <DashboardWindow />
            <ContainersWindow />
        </div>
    );
}
